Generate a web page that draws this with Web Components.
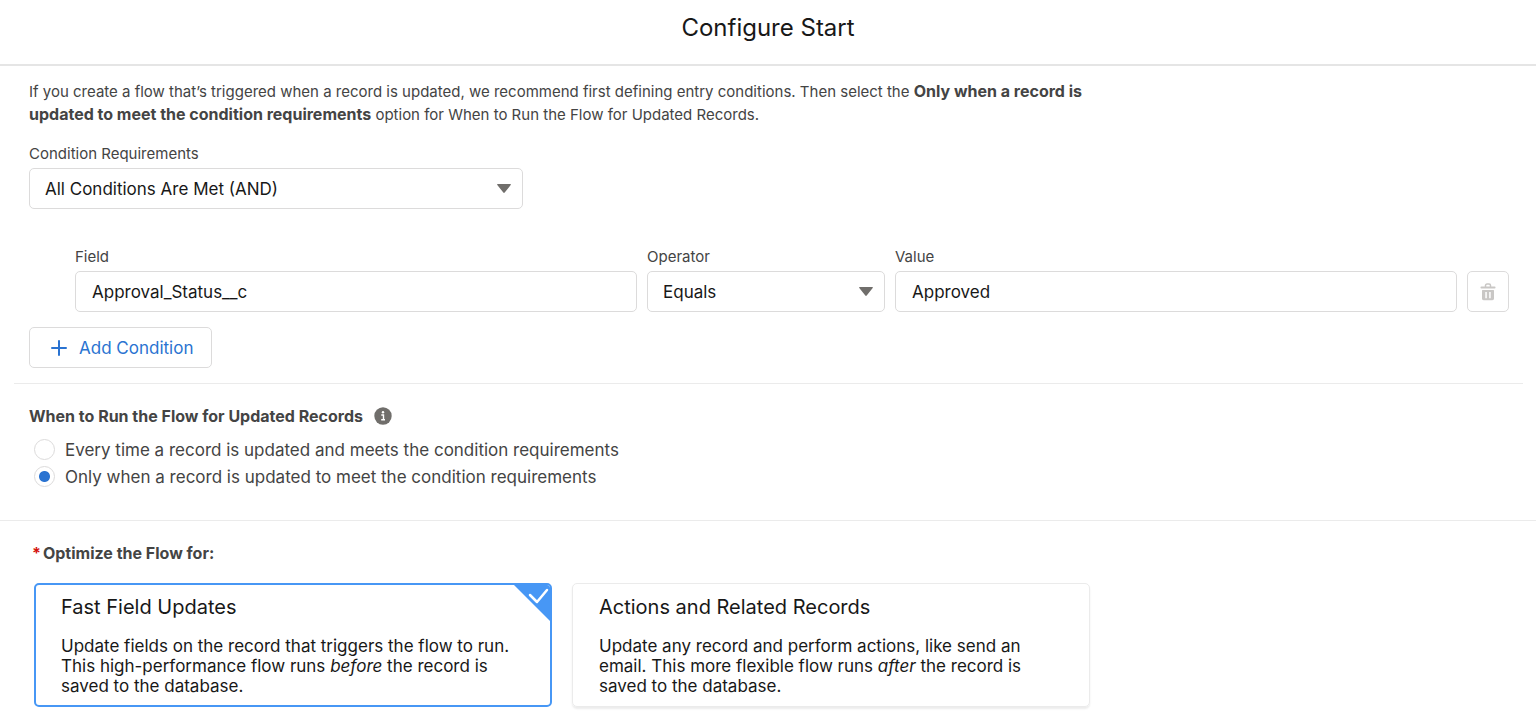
<!DOCTYPE html>
<html lang="en">
<head>
<meta charset="utf-8">
<meta name="viewport" content="width=device-width, initial-scale=1">
<title>Configure Start</title>
<style>
    body {
        margin: 0;
        background: #fff;
        color: #444;
        font-family: Inter, "Liberation Sans", sans-serif;
        font-size: 17px;
        line-height: 20px;
    }
</style>
</head>
<body>

<start-panel heading="Configure Start">
    <panel-section divider="inset">
        <entry-hint>
            If you create a flow that’s triggered when a record is updated, we recommend first defining entry conditions. Then select the <b>Only when a record is updated to meet the condition requirements</b> option for When to Run the Flow for Updated Records.
        </entry-hint>
        <select-field class="logic" label="Condition Requirements" options="All Conditions Are Met (AND)|Any Condition Is Met (OR)"></select-field>
        <condition-row>
            <text-field label="Field" value="Approval_Status__c"></text-field>
            <select-field label="Operator" options="Equals|Does Not Equal"></select-field>
            <text-field label="Value" value="Approved"></text-field>
        </condition-row>
        <add-button>Add Condition</add-button>
    </panel-section>

    <panel-section divider="full">
        <run-options
            heading="When to Run the Flow for Updated Records"
            options="Every time a record is updated and meets the condition requirements|Only when a record is updated to meet the condition requirements"
            selected="1"></run-options>
    </panel-section>

    <panel-section>
        <card-picker heading="Optimize the Flow for:">
            <choice-card checked>
                <span slot="title">Fast Field Updates</span>
                Update fields on the record that triggers the flow to run. This high-performance flow runs <i>before</i> the record is saved to the database.
            </choice-card>
            <choice-card>
                <span slot="title">Actions and Related Records</span>
                Update any record and perform actions, like send an email. This more flexible flow runs <i>after</i> the record is saved to the database.
            </choice-card>
        </card-picker>
    </panel-section>
</start-panel>

<script>
const controlStyles = `
    * { box-sizing: border-box; }
    label {
        display: block;
        margin-bottom: 4px;
        font-size: 15px;
        color: #444;
    }
    input, select {
        display: block;
        width: 100%;
        height: 41px;
        margin: 0;
        padding: 0 16px;
        border: 1px solid #dcdbdb;
        border-radius: 5px;
        background: #fff;
        color: #181818;
        font: inherit;
    }
`;

class StartPanel extends HTMLElement {
    connectedCallback() {
        this.attachShadow({ mode: 'open' }).innerHTML = `
            <style>
                :host { display: block; }
                header {
                    padding: 12px 16px 20px;
                    border-bottom: 2px solid #e5e5e5;
                    text-align: center;
                }
                h1 {
                    margin: 0;
                    font-size: 24px;
                    line-height: 32px;
                    font-weight: 400;
                    color: #181818;
                }
            </style>
            <header><h1>${this.getAttribute('heading')}</h1></header>
            <main><slot></slot></main>
        `;
    }
}

class PanelSection extends HTMLElement {
    connectedCallback() {
        this.attachShadow({ mode: 'open' }).innerHTML = `
            <style>
                :host { display: block; }
                .body { padding: 14px 27px 15px 29px; }
                hr { margin: 0; border: 0; border-top: 1px solid #ebebeb; }
                :host([divider="inset"]) hr { margin: 0 13px 0 14px; }
                :host([divider="full"]) .body { padding: 22px 27px 30px 29px; }
                :host(:not([divider])) .body { padding: 22px 27px 14px 32px; }
                :host(:not([divider])) hr { display: none; }
                ::slotted(.logic) { width: 494px; max-width: 100%; margin-top: 18px; }
                ::slotted(condition-row) { margin: 38px 0 15px 46px; }
            </style>
            <div class="body"><slot></slot></div>
            <hr>
        `;
    }
}

class EntryHint extends HTMLElement {
    connectedCallback() {
        this.attachShadow({ mode: 'open' }).innerHTML = `
            <style>
                :host {
                    display: block;
                    max-width: 1100px;
                    font-size: 15px;
                    line-height: 23px;
                }
                ::slotted(b) { font-size: 16px; }
            </style>
            <slot></slot>
        `;
    }
}

class TextField extends HTMLElement {
    connectedCallback() {
        this.attachShadow({ mode: 'open' }).innerHTML = `
            <style>
                :host { display: block; }
                ${controlStyles}
            </style>
            <label for="control">${this.getAttribute('label')}</label>
            <input id="control" type="text" value="${this.getAttribute('value') || ''}">
        `;
    }
}

class SelectField extends HTMLElement {
    connectedCallback() {
        const options = this.getAttribute('options').split('|');
        this.attachShadow({ mode: 'open' }).innerHTML = `
            <style>
                :host { display: block; }
                ${controlStyles}
                .wrap { display: grid; align-items: center; }
                .wrap > * { grid-area: 1 / 1; }
                select { appearance: none; padding: 0 36px 0 15px; }
                svg {
                    justify-self: end;
                    margin-right: 12px;
                    fill: #706e6b;
                    pointer-events: none;
                }
            </style>
            <label for="control">${this.getAttribute('label')}</label>
            <div class="wrap">
                <select id="control">
                    ${options.map(o => `<option>${o}</option>`).join('')}
                </select>
                <svg width="14" height="9" viewBox="0 0 14 9" aria-hidden="true">
                    <path d="M.8 0h12.4c.7 0 1 .6.5 1.100L7.700 8.600a1 1 0 0 1-1.400 0L.3 1.100C-.2.6.1 0 .8 0z"/>
                </svg>
            </div>
        `;
    }
}

class ConditionRow extends HTMLElement {
    connectedCallback() {
        this.attachShadow({ mode: 'open' }).innerHTML = `
            <style>
                :host {
                    display: grid;
                    grid-template-columns: 1fr 238px 1fr 42px;
                    gap: 10px;
                    align-items: end;
                }
                button {
                    display: grid;
                    place-items: center;
                    height: 41px;
                    padding: 0;
                    border: 1px solid #dcdbdb;
                    border-radius: 5px;
                    background: #fff;
                }
            </style>
            <slot></slot>
            <button type="button" aria-label="Delete condition" disabled>
                <svg width="16" height="18" viewBox="0 0 16 18" aria-hidden="true">
                    <path d="M5.500 4V2.600C5.500 1.600 6.200 1 7 1h2c.8 0 1.500.6 1.500 1.600V4" fill="none" stroke="#c9c7c5" stroke-width="1.500"/>
                    <rect x=".5" y="3.500" width="15" height="2" rx=".8" fill="#c9c7c5"/>
                    <path fill="#c9c7c5" fill-rule="evenodd" d="M2.600 7h10.800c.4 0 .6.2.6.6v8c0 1-.7 1.700-1.700 1.700H3.700c-1 0-1.700-.7-1.700-1.700v-8c0-.4.2-.6.6-.6zM5.300 9v6.200h1.500V9zM9.200 9v6.200h1.500V9z"/>
                </svg>
            </button>
        `;
    }
}

class AddButton extends HTMLElement {
    connectedCallback() {
        this.attachShadow({ mode: 'open' }).innerHTML = `
            <style>
                :host { display: block; }
                button {
                    display: flex;
                    align-items: center;
                    gap: 12px;
                    height: 41px;
                    padding: 0 18px 0 21px;
                    border: 1px solid #dcdbdb;
                    border-radius: 5px;
                    background: #fff;
                    color: #2a73d1;
                    font: inherit;
                    cursor: pointer;
                }
            </style>
            <button type="button">
                <svg width="16" height="16" viewBox="0 0 16 16" aria-hidden="true">
                    <path d="M8 1v14M1 8h14" stroke="currentColor" stroke-width="2" stroke-linecap="round"/>
                </svg>
                <slot></slot>
            </button>
        `;
    }
}

class RunOptions extends HTMLElement {
    connectedCallback() {
        const options = this.getAttribute('options').split('|');
        const selected = Number(this.getAttribute('selected'));
        this.attachShadow({ mode: 'open' }).innerHTML = `
            <style>
                :host { display: block; }
                .heading {
                    display: flex;
                    align-items: center;
                    gap: 11px;
                    margin-bottom: 10px;
                }
                h2 { margin: 0; font-size: 16px; line-height: 20px; }
                .option {
                    display: flex;
                    align-items: center;
                    gap: 10px;
                    height: 27px;
                    padding-left: 5px;
                }
                input {
                    appearance: none;
                    box-sizing: border-box;
                    width: 21px;
                    height: 21px;
                    margin: 0;
                    border: 1px solid #dcdbdb;
                    border-radius: 50%;
                    background: #fff;
                }
                input:checked {
                    background: radial-gradient(circle, #2a73d1 5px, #fff 6px);
                }
            </style>
            <div class="heading">
                <h2 id="heading">${this.getAttribute('heading')}</h2>
                <svg width="18" height="18" viewBox="0 0 18 18" aria-hidden="true">
                    <circle cx="9" cy="9" r="8.700" fill="#706e6b"/>
                    <circle cx="9" cy="5.300" r="1.200" fill="#fff"/>
                    <path d="M7.300 8H9.500v4.500M7.200 12.700h3.800" fill="none" stroke="#fff" stroke-width="1.400"/>
                </svg>
            </div>
            <div role="radiogroup" aria-labelledby="heading">
                ${options.map((text, i) => `
                    <div class="option">
                        <input type="radio" name="run" id="run-${i}" ${i === selected ? 'checked' : ''}>
                        <label for="run-${i}">${text}</label>
                    </div>
                `).join('')}
            </div>
        `;
    }
}

class CardPicker extends HTMLElement {
    connectedCallback() {
        this.attachShadow({ mode: 'open' }).innerHTML = `
            <style>
                :host { display: block; }
                h2 {
                    margin: 0 0 20px;
                    font-size: 16px;
                    line-height: 20px;
                }
                .required { margin-right: 2px; color: #d4120c; }
                .cards {
                    display: flex;
                    flex-wrap: wrap;
                    gap: 20px;
                    margin-left: 2px;
                }
            </style>
            <h2 id="heading"><span class="required">*</span>${this.getAttribute('heading')}</h2>
            <div class="cards" role="radiogroup" aria-labelledby="heading"><slot></slot></div>
        `;
        this.addEventListener('card-select', event => {
            this.querySelectorAll('choice-card').forEach(card => {
                card.toggleAttribute('checked', card === event.target);
            });
        });
    }
}

class ChoiceCard extends HTMLElement {
    static get observedAttributes() {
        return ['checked'];
    }

    attributeChangedCallback() {
        if (this.shadowRoot) this.sync();
    }

    connectedCallback() {
        this.attachShadow({ mode: 'open' }).innerHTML = `
            <style>
                :host {
                    display: block;
                    width: 518px;
                    max-width: 100%;
                    color: #181818;
                }
                label {
                    display: block;
                    position: relative;
                    box-sizing: border-box;
                    height: 100%;
                    padding: 9px 40px 9px 25px;
                    border: 2px solid #4797f5;
                    border-radius: 5px;
                    cursor: pointer;
                }
                :host(:not([checked])) label {
                    padding: 10px 41px 10px 26px;
                    border: 1px solid #ebebeb;
                    box-shadow: 0 2px 2px rgba(0, 0, 0, .08);
                }
                input {
                    position: absolute;
                    opacity: 0;
                    pointer-events: none;
                }
                .title {
                    display: block;
                    margin-bottom: 16px;
                    font-size: 20px;
                    line-height: 26px;
                }
                .text { display: block; }
                /* selected marker lies over the top right corner */
                svg { position: absolute; top: 0; right: 0; }
                :host(:not([checked])) svg { display: none; }
            </style>
            <label>
                <input type="radio">
                <span class="title"><slot name="title"></slot></span>
                <span class="text"><slot></slot></span>
                <svg width="36" height="36" viewBox="0 0 36 36" aria-hidden="true">
                    <path d="M0 0h33a3 3 0 0 1 3 3v33z" fill="#4797f5"/>
                    <path d="M16 10l7 7L33 5" fill="none" stroke="#fff" stroke-width="2.500" stroke-linecap="round" stroke-linejoin="round"/>
                </svg>
            </label>
        `;
        this.shadowRoot.querySelector('input').addEventListener('change', () => {
            this.dispatchEvent(new CustomEvent('card-select', { bubbles: true, composed: true }));
        });
        this.sync();
    }

    sync() {
        this.shadowRoot.querySelector('input').checked = this.hasAttribute('checked');
    }
}

customElements.define('start-panel', StartPanel);
customElements.define('panel-section', PanelSection);
customElements.define('entry-hint', EntryHint);
customElements.define('text-field', TextField);
customElements.define('select-field', SelectField);
customElements.define('condition-row', ConditionRow);
customElements.define('add-button', AddButton);
customElements.define('run-options', RunOptions);
customElements.define('card-picker', CardPicker);
customElements.define('choice-card', ChoiceCard);
</script>
</body>
</html>
